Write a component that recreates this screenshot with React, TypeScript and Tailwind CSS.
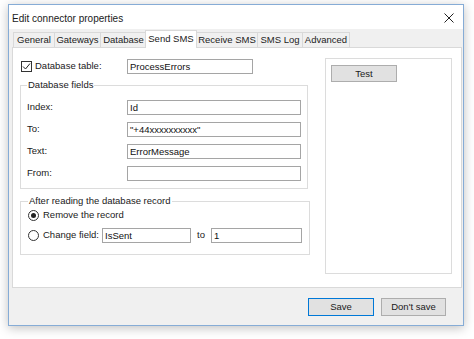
import React from 'react';

const font = { fontFamily: '"Liberation Sans", Arial, sans-serif' };

const tabs = [
  { label: 'General', w: 'w-[42px]' },
  { label: 'Gateways', w: 'w-[47px]' },
  { label: 'Database', w: 'w-[47px]' },
  { label: 'Send SMS', w: 'w-[52px]', active: true },
  { label: 'Receive SMS', w: 'w-[62px]' },
  { label: 'SMS Log', w: 'w-[46px]' },
  { label: 'Advanced', w: 'w-[48px]' },
];

const TextBox: React.FC<{ value: string; className?: string }> = ({ value, className = '' }) => (
  <div className={`h-[15px] whitespace-nowrap border border-[#a5a5a5] bg-white px-[2px] text-[9.5px] leading-[13px] text-[#111] ${className}`}>
    {value}
  </div>
);

const Radio: React.FC<{ checked?: boolean }> = ({ checked }) => (
  <div className="flex h-[11px] w-[11px] shrink-0 items-center justify-center rounded-full border border-[#333] bg-white">
    {checked && <div className="h-[5px] w-[5px] rounded-full bg-[#222]" />}
  </div>
);

const FieldRow: React.FC<{ label: string; value: string }> = ({ label, value }) => (
  <div className="flex h-[15px] items-center">
    <span className="w-[100px]">{label}</span>
    <TextBox value={value} className="w-[174px]" />
  </div>
);

export default function App() {
  return (
    <div className="h-[339px] w-[474px] bg-white pl-[8px] pt-[4px] text-[9.5px] text-[#1a1a1a]" style={font}>
      <div className="flex h-[322px] w-[456px] flex-col border border-[#86acd6] bg-[#f0f0f0] shadow-[0_2px_10px_rgba(0,0,0,0.25)]">
        {/* title bar */}
        <div className="flex h-[24px] items-center justify-between bg-white pl-[3px] pr-[9px] pt-[2px]">
          <span className="text-[10px]">Edit connector properties</span>
          <svg width="10" height="10" viewBox="0 0 10 10" stroke="#222" strokeWidth="1">
            <path d="M0.5 0.5 L9.5 9.5 M9.5 0.5 L0.5 9.5" />
          </svg>
        </div>

        <div className="flex flex-1 flex-col px-[3px]">
          {/* tabs */}
          <div className="flex h-[18px] items-end pl-[1px] pt-[1px]">
            {tabs.map(t =>
              t.active ? (
                <div
                  key={t.label}
                  className={`${t.w} relative z-10 -mx-[1px] -mb-[1px] flex h-[18px] items-center justify-center whitespace-nowrap border border-b-0 border-[#d9d9d9] bg-white`}
                >
                  {t.label}
                </div>
              ) : (
                <div
                  key={t.label}
                  className={`${t.w} -mr-[1px] flex h-[15px] items-center justify-center whitespace-nowrap border border-b-0 border-[#d9d9d9] bg-[#f0f0f0] text-[#222]`}
                >
                  {t.label}
                </div>
              )
            )}
          </div>

          {/* tab page */}
          <div className="flex h-[241px] w-[450px] gap-[18px] border border-[#d9d9d9] bg-white pl-[7px] pt-[10px]">
            <div className="flex w-[287px] flex-col">
              <div className="mt-[1px] flex h-[15px] items-center">
                <div className="ml-[1px] flex h-[11px] w-[11px] items-center justify-center border border-[#333] bg-white">
                  <svg width="9" height="9" viewBox="0 0 9 9" fill="none" stroke="#222" strokeWidth="1">
                    <path d="M1 4.5 L3.5 7 L8 1.5" />
                  </svg>
                </div>
                <span className="ml-[3px] w-[92px]">Database table:</span>
                <TextBox value="ProcessErrors" className="w-[126px]" />
              </div>

              <fieldset className="mt-[5px] h-[110px] border border-[#dcdcdc] px-[6px]">
                <legend className="px-[1px] leading-[12px]">Database fields</legend>
                <div className="mt-[9px] flex flex-col gap-[7px]">
                  <FieldRow label="Index:" value="Id" />
                  <FieldRow label="To:" value={'"+44xxxxxxxxxx"'} />
                  <FieldRow label="Text:" value="ErrorMessage" />
                  <FieldRow label="From:" value="" />
                </div>
              </fieldset>

              <fieldset className="mt-[6px] h-[60px] border border-[#dcdcdc] px-[7px]">
                <legend className="px-[1px] leading-[12px]">After reading the database record</legend>
                <div className="flex h-[16px] items-center gap-[4px]">
                  <Radio checked />
                  <span>Remove the record</span>
                </div>
                <div className="mt-[5px] flex h-[15px] items-center">
                  <Radio />
                  <span className="ml-[4px] w-[59px] whitespace-nowrap">Change field:</span>
                  <TextBox value="IsSent" className="w-[89px]" />
                  <span className="w-[20px] pl-[6px]">to</span>
                  <TextBox value="1" className="w-[91px]" />
                </div>
              </fieldset>
            </div>

            <div className="h-[216px] w-[127px] border border-[#dcdcdc] pl-[5px] pt-[6px]">
              <button className="h-[17px] w-[66px] border border-[#adadad] bg-[#e1e1e1] text-[9.5px] leading-[15px]">
                Test
              </button>
            </div>
          </div>

          {/* footer buttons */}
          <div className="mt-[10px] flex justify-end gap-[7px] pr-[14px]">
            <button className="h-[18px] w-[66px] border border-[#0078d7] bg-[#e1e1e1] text-[9.5px] leading-[16px]">
              Save
            </button>
            <button className="h-[18px] w-[65px] border border-[#adadad] bg-[#e1e1e1] text-[9.5px] leading-[16px]">
              Don't save
            </button>
          </div>
        </div>
      </div>
    </div>
  );
}
